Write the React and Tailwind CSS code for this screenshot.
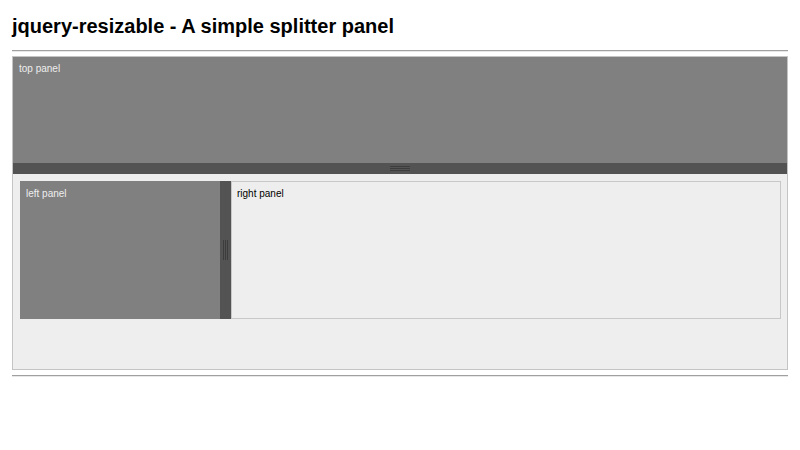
export default function App() {
  return (
    <div className="min-h-[450px] bg-white px-3 pt-[14px] font-['Liberation_Sans',Arial,sans-serif] text-black">
      <h1 className="text-[20px] font-bold leading-[24px]">jquery-resizable - A simple splitter panel</h1>
      <hr className="mt-[12px] h-[2px] border-0 border-t border-b border-t-[#a0a0a0] border-b-[#e8e8e8]" />

      {/* vertical splitter container */}
      <div className="mt-[4px] flex h-[314px] flex-col border border-[#c4c4c4] bg-[#eeeeee]">
        <div className="h-[106px] bg-[#808080] px-[6px] py-[6px] text-[10px] leading-[12px] text-[#eeeeee]">top panel</div>
        <div className="flex h-[11px] items-center justify-center bg-[#535353]">
          <div className="flex w-[20px] flex-col gap-[1px]">
            <div className="h-[1px] bg-[#3c3c3c]" />
            <div className="h-[1px] bg-[#3c3c3c]" />
            <div className="h-[1px] bg-[#3c3c3c]" />
          </div>
        </div>

        {/* horizontal splitter */}
        <div className="px-[7px] pt-[7px] pr-[6px]">
          <div className="flex h-[138px]">
            <div className="w-[200px] bg-[#808080] px-[6px] py-[7px] text-[10px] leading-[12px] text-[#eeeeee]">left panel</div>
            <div className="flex w-[11px] items-center justify-center bg-[#535353]">
              <div className="flex h-[20px] gap-[1px]">
                <div className="w-[1px] bg-[#3c3c3c]" />
                <div className="w-[1px] bg-[#3c3c3c]" />
                <div className="w-[1px] bg-[#3c3c3c]" />
              </div>
            </div>
            <div className="flex-1 border border-[#c8c8c8] bg-[#eeeeee] px-[5px] py-[6px] text-[10px] leading-[12px]">right panel</div>
          </div>
        </div>
      </div>
      <hr className="mt-[5px] h-[2px] border-0 border-t border-b border-t-[#a0a0a0] border-b-[#e8e8e8]" />
    </div>
  );
}
